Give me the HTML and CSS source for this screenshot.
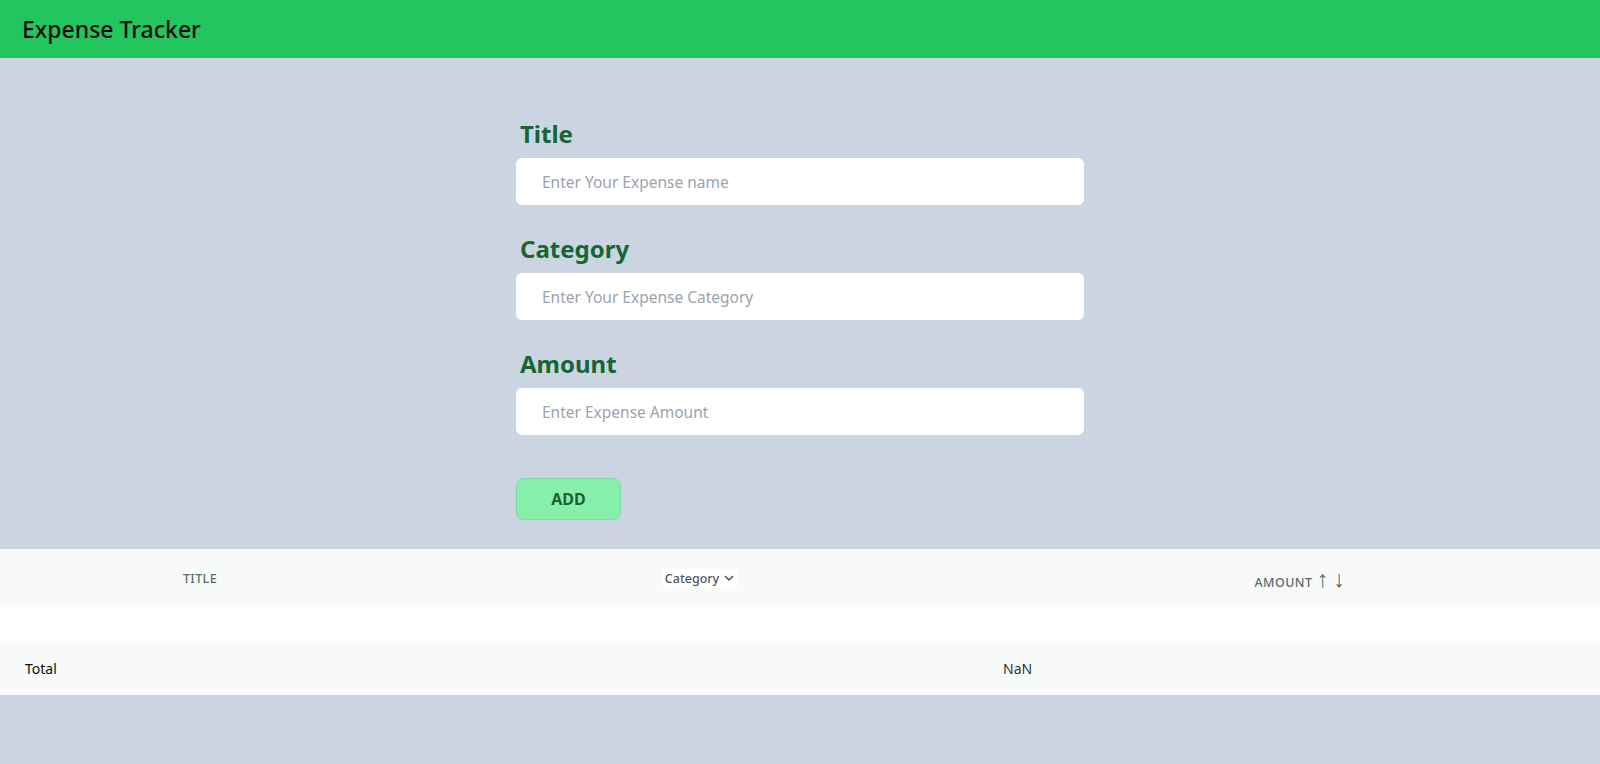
FILE: index.html
```html
<!DOCTYPE html>
<html lang="en">
<head>
    <meta charset="UTF-8">
    <meta name="viewport" content="width=device-width, initial-scale=1.0">
    <title>Expense Tracker</title>
    <link rel="stylesheet" href="styles.css">
</head>
<body>
    <header class="navbar">
        <h1>Expense Tracker</h1>
    </header>

    <form class="expense-form" id="expenseForm">
        <div class="field">
            <label for="title">Title</label>
            <input type="text" id="title" name="title" placeholder="Enter Your Expense name">
        </div>
        <div class="field">
            <label for="category">Category</label>
            <input type="text" id="category" name="category" placeholder="Enter Your Expense Category">
        </div>
        <div class="field">
            <label for="amount">Amount</label>
            <input type="text" id="amount" name="amount" placeholder="Enter Expense Amount">
        </div>
        <button type="submit" class="btn-add">ADD</button>
    </form>

    <table class="expense-table">
        <colgroup>
            <col class="col-title">
            <col class="col-category">
            <col class="col-amount">
        </colgroup>
        <thead>
            <tr>
                <th>Title</th>
                <th>
                    <span class="category-select">Category
                        <svg width="12" height="12" viewBox="0 0 12 12"><path d="M2.5 4.5 L6 8 L9.5 4.5" fill="none" stroke="#4b5563" stroke-width="1.6" stroke-linecap="round" stroke-linejoin="round"/></svg>
                    </span>
                </th>
                <th>Amount <span class="sort">&uarr;</span> <span class="sort">&darr;</span></th>
            </tr>
        </thead>
        <tbody>
            <tr class="empty-row"><td colspan="3"></td></tr>
        </tbody>
        <tfoot>
            <tr>
                <td class="total-label">Total</td>
                <td></td>
                <td class="total-value">NaN</td>
            </tr>
        </tfoot>
    </table>
</body>
</html>
```

FILE: styles.css
```css
body {
    margin: 0;
    padding: 0;
    background-color: #cbd5e1;
    font-family: 'Noto Sans', 'Open Sans', sans-serif;
}

.navbar {
    height: 58px;
    background-color: #22c55e;
    display: flex;
    align-items: center;
    padding: 0 22px;
}

.navbar h1 {
    margin: 0;
    font-size: 23px;
    font-weight: 500;
    color: #0b0f0c;
}

.expense-form {
    width: 568px;
    margin: 0 auto;
    padding-top: 60px;
}

.field {
    display: flex;
    flex-direction: column;
    gap: 8px;
    margin-bottom: 28px;
}

.field label {
    font-size: 24px;
    line-height: 32px;
    font-weight: 700;
    color: #166534;
    padding-left: 4px;
}

.field input {
    height: 47px;
    border: none;
    border-radius: 6px;
    padding: 0 26px;
    font-family: inherit;
    font-size: 15.5px;
    background: #fff;
    box-sizing: border-box;
    outline: none;
}

.field input::placeholder {
    color: #9ca3af;
}

.btn-add {
    margin-top: 15px;
    width: 105px;
    height: 42px;
    background-color: #86efac;
    border: 1px solid #7edc9f;
    border-radius: 8px;
    color: #1f5f3a;
    font-family: inherit;
    font-size: 16px;
    font-weight: 700;
    cursor: pointer;
}

.expense-table {
    width: 100%;
    margin-top: 29px;
    border-collapse: collapse;
    table-layout: fixed;
}

.col-title { width: 400px; }
.col-category { width: 600px; }
.col-amount { width: 600px; }

.expense-table thead tr {
    height: 58px;
    background-color: #f8fafa;
}

.expense-table th {
    font-size: 12.5px;
    font-weight: 500;
    text-transform: uppercase;
    letter-spacing: 0.4px;
    color: #5b6b6b;
    text-align: center;
    vertical-align: middle;
}

.category-select {
    display: inline-flex;
    align-items: center;
    gap: 4px;
    text-transform: none;
    letter-spacing: 0;
    font-size: 12.5px;
    color: #4b5563;
    background: #fff;
    padding: 1px 2px;
}

.sort {
    font-size: 23px;
    font-weight: 400;
    color: #4a6f64;
    margin-left: 1px;
}

.empty-row td {
    height: 34px;
    padding: 0;
    background-color: #fff;
}

.expense-table tfoot tr {
    height: 54px;
    background-color: #f8fafa;
}

.expense-table tfoot td {
    font-size: 14px;
    vertical-align: middle;
}

.total-label {
    padding-left: 25px;
    color: #0b0f0c;
}

.total-value {
    padding-left: 3px;
    color: #1f3b3b;
}
```
